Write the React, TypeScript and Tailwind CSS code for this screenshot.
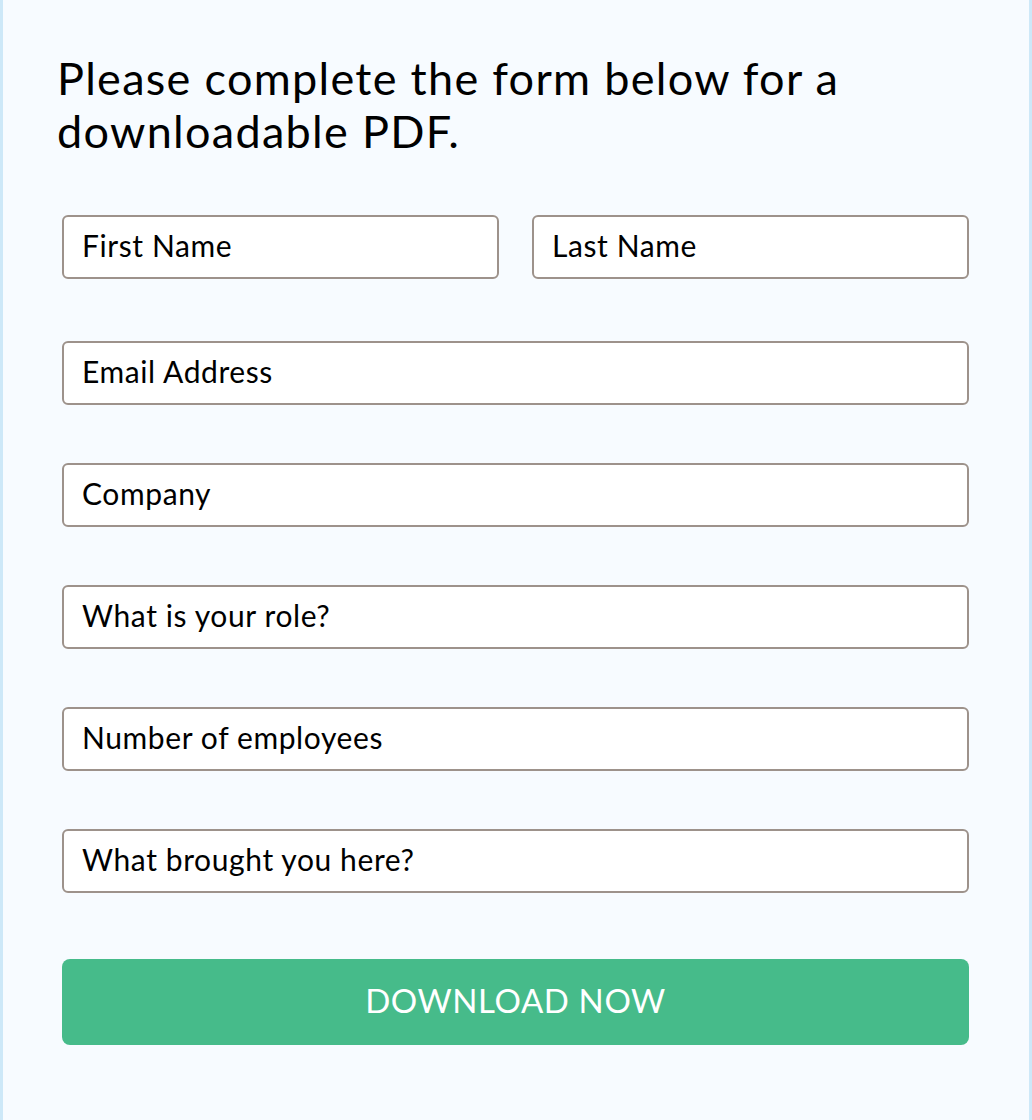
import React from "react";

const font = { fontFamily: "Lato, 'Noto Sans', sans-serif" };

const Field = ({ label, className = "" }: { label: string; className?: string }) => (
  <div
    className={`h-[64px] rounded-[6px] border-2 border-[#9d928b] bg-white flex items-center pl-[18px] pb-[3px] text-[30px] tracking-[0.6px] text-black ${className}`}
  >
    {label}
  </div>
);

export default function App() {
  return (
    <div
      className="w-[1032px] h-[1120px] bg-[#f7fbff] border-l-[3px] border-r-[3px] border-[#cde8f8] flex flex-col"
      style={font}
    >
      <h1 className="pl-[54px] pt-[52px] text-[45px] leading-[53px] tracking-[1.3px] text-black font-normal">
        Please complete the form below for a
        <br />
        downloadable PDF.
      </h1>
      <div className="pl-[59px] pr-[60px] pt-[57px] flex flex-col">
        <div className="flex gap-[33px]">
          <Field label="First Name" className="flex-1" />
          <Field label="Last Name" className="flex-1" />
        </div>
        <div className="flex flex-col gap-[58px] mt-[62px]">
          <Field label="Email Address" />
          <Field label="Company" />
          <Field label="What is your role?" />
          <Field label="Number of employees" />
          <Field label="What brought you here?" />
        </div>
        <button className="mt-[66px] h-[86px] rounded-[8px] bg-[#46bb8a] text-white text-[33px] tracking-[0.6px] font-normal pb-[3px]">
          DOWNLOAD NOW
        </button>
      </div>
    </div>
  );
}
